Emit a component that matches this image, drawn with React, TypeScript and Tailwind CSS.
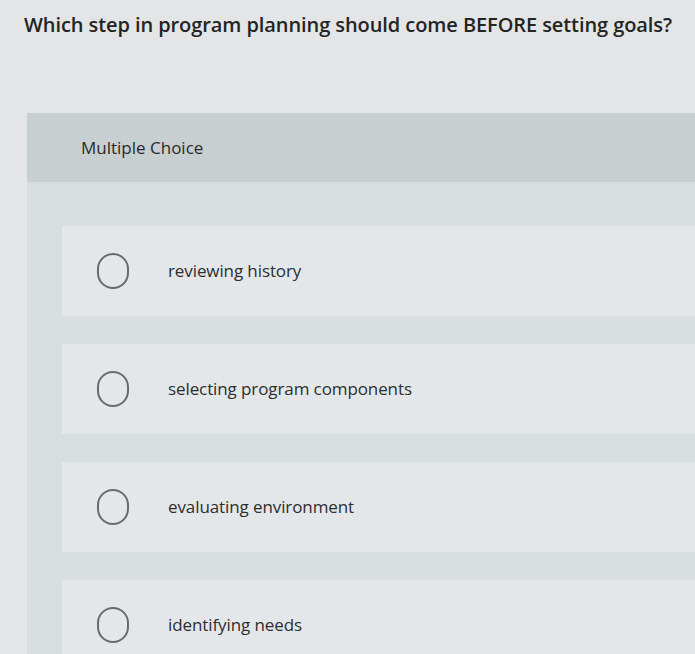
import React from 'react';

const options = [
    'reviewing history',
    'selecting program components',
    'evaluating environment',
    'identifying needs',
];

const App: React.FC = () => {
    return (
        <div
            className="w-[695px] h-[654px] overflow-hidden bg-[#e3e5e6] text-[#2d2d2d]"
            style={{ fontFamily: '"Open Sans", "Liberation Sans", sans-serif' }}
        >
            <h1 className="pl-[24px] pt-[10px] text-[20px] font-semibold leading-[30px] tracking-[-0.08px] text-[#242424]">
                Which step in program planning should come BEFORE setting goals?
            </h1>

            <div className="ml-[27px] mt-[73px] bg-[#d8dde0]">
                <div className="h-[69px] flex items-center pl-[54px] bg-[#c8cfd1]">
                    <span className="text-[17px] font-medium text-[#2a2a2a]">Multiple Choice</span>
                </div>

                <div className="pl-[35px] pt-[44px] flex flex-col gap-[28px]">
                    {options.map((opt) => (
                        <div key={opt} className="h-[90px] flex items-center bg-[#e4e7e9]">
                            <div className="ml-[35px] w-[32px] h-[36px] rounded-full border-2 border-[#6a6a6a] shrink-0" />
                            <span className="ml-[39px] text-[17px] font-medium tracking-[-0.1px] text-[#2e2e2e]">
                                {opt}
                            </span>
                        </div>
                    ))}
                </div>
            </div>
        </div>
    );
};

export default App;
